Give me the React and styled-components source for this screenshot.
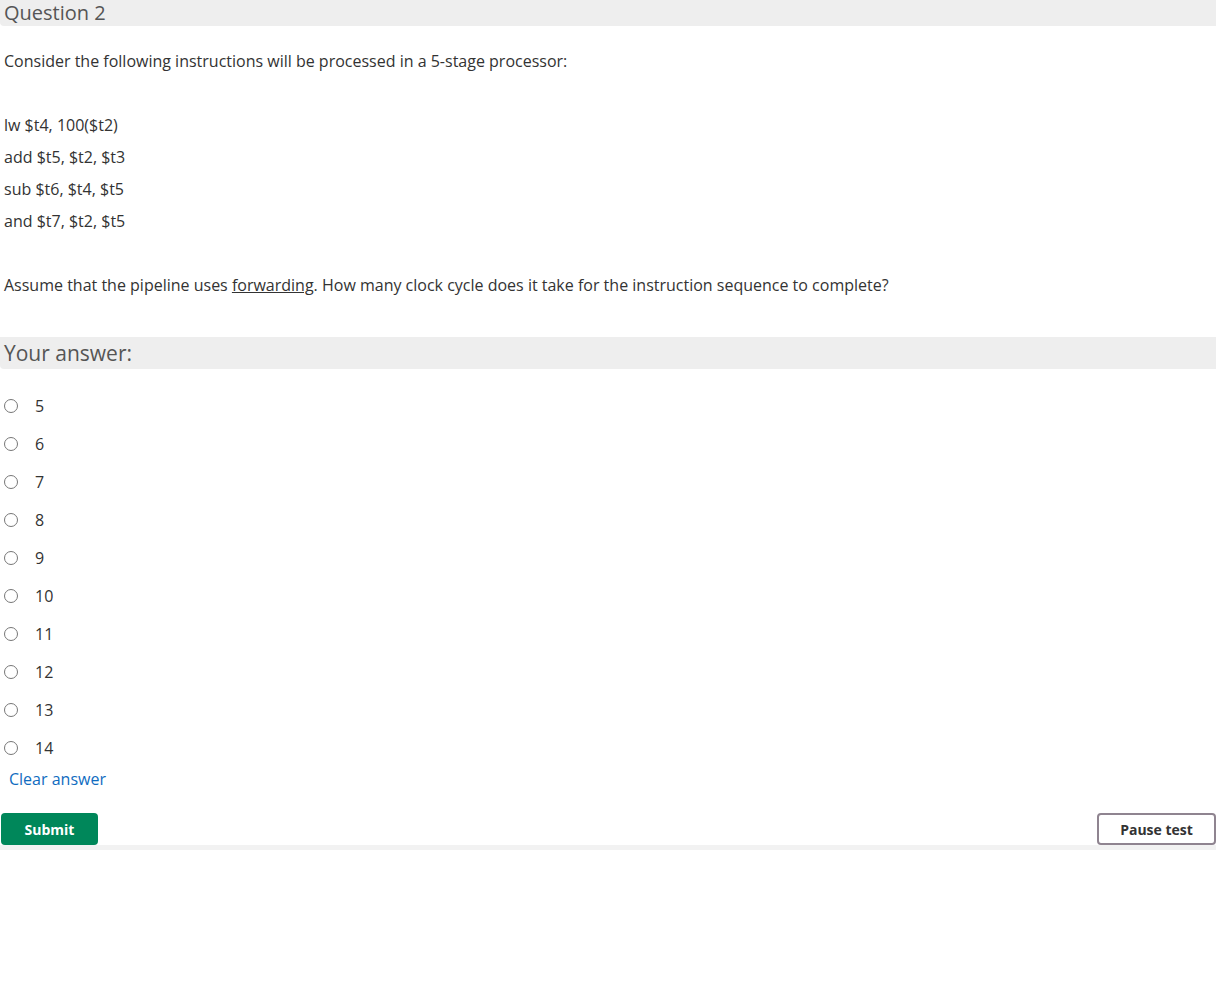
import React from "react";
import styled, { createGlobalStyle } from "styled-components";

const Global = createGlobalStyle`
  body {
    margin: 0;
    background: #fff;
    font-family: "Open Sans", "Liberation Sans", sans-serif;
    color: #333;
  }
`;

const Page = styled.div`
  width: 1216px;
`;

const Bar = styled.div`
  background: #eeeeee;
  height: ${(p) => p.h}px;
  line-height: ${(p) => p.h}px;
  font-size: ${(p) => p.size}px;
  color: #555;
  padding-left: 4px;
  border-radius: 0 0 0 4px;
  box-sizing: border-box;
`;

const Body = styled.div`
  padding: 19px 4px 0 4px;
  font-size: 16px;
  line-height: 32px;
`;

const Para = styled.p`
  margin: 0 0 32px 0;
  &:last-child {
    margin-bottom: 36px;
  }
`;

const Line = styled.div``;

const Link = styled.a`
  color: #333;
  text-decoration: underline;
`;

const Options = styled.div`
  padding: 18px 0 0 4px;
`;

const Option = styled.label`
  display: flex;
  align-items: center;
  height: 38px;
  font-size: 16px;
  color: #333;
`;

const Radio = styled.span`
  width: 12px;
  height: 12px;
  border: 1px solid #777;
  border-radius: 50%;
  margin-right: 17px;
`;

const Clear = styled.a`
  display: block;
  margin-left: 9px;
  font-size: 16px;
  line-height: 24px;
  color: #0f6cbf;
`;

const Actions = styled.div`
  display: flex;
  justify-content: space-between;
  align-items: flex-end;
  margin-top: 22px;
  padding-left: 1px;
  border-bottom: 5px solid #f2f2f2;
`;

const Button = styled.button`
  height: 32px;
  width: ${(p) => p.w}px;
  border-radius: 4px;
  font-family: "Open Sans", "Liberation Sans", sans-serif;
  font-weight: 700;
  font-size: 14px;
  cursor: pointer;
  background: ${(p) => (p.primary ? "#00875a" : "#fff")};
  color: ${(p) => (p.primary ? "#fff" : "#333")};
  border: ${(p) => (p.primary ? "none" : "2px solid #8f8490")};
`;

const answers = [5, 6, 7, 8, 9, 10, 11, 12, 13, 14];

export default function App() {
  return (
    <Page>
      <Global />
      <Bar h={26} size={20}>Question 2</Bar>
      <Body>
        <Para>Consider the following instructions will be processed in a 5-stage processor:</Para>
        <Para>
          <Line>lw $t4, 100($t2)</Line>
          <Line>add $t5, $t2, $t3</Line>
          <Line>sub $t6, $t4, $t5</Line>
          <Line>and $t7, $t2, $t5</Line>
        </Para>
        <Para>
          Assume that the pipeline uses <Link>forwarding</Link>. How many clock cycle does it take for the
          instruction sequence to complete?
        </Para>
      </Body>
      <Bar h={32} size={21}>Your answer:</Bar>
      <Options>
        {answers.map((a) => (
          <Option key={a}>
            <Radio />
            {a}
          </Option>
        ))}
      </Options>
      <Clear>Clear answer</Clear>
      <Actions>
        <Button primary w={97}>Submit</Button>
        <Button w={119}>Pause test</Button>
      </Actions>
    </Page>
  );
}
